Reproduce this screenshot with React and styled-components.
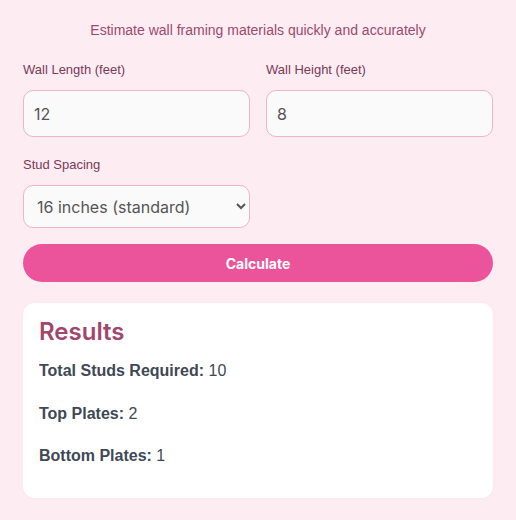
import React, { useState } from "react";
import styled, { createGlobalStyle } from "styled-components";

const GlobalStyle = createGlobalStyle`
  body {
    margin: 0;
    background: #fdedf3;
    font-family: "Liberation Sans", Arial, sans-serif;
  }
`;

const Page = styled.div`
  padding: 22px 23px 20px;
`;

const Subtitle = styled.p`
  margin: 0 0 24px;
  text-align: center;
  font-size: 14px;
  line-height: 16px;
  color: #9c4a6c;
`;

const Row = styled.div`
  display: grid;
  grid-template-columns: minmax(0, 1fr) minmax(0, 1fr);
  gap: 16px;
  margin-bottom: ${(p) => (p.$last ? "0" : "20px")};
`;

const Field = styled.div`
  display: flex;
  flex-direction: column;
  min-width: 0;
`;

const Label = styled.label`
  font-size: 13px;
  line-height: 15px;
  color: #7c3a55;
  margin-bottom: 13px;
`;

const Input = styled.input`
  box-sizing: border-box;
  width: 100%;
  height: 47px;
  padding: 0 10px;
  border: 1px solid #efb4ca;
  border-radius: 10px;
  background: #fafafa;
  font-family: Inter, sans-serif;
  font-size: 16px;
  color: #555;
  outline: none;
`;

const Select = styled.select`
  box-sizing: border-box;
  width: 100%;
  height: 43px;
  padding: 0 8px 0 9px;
  border: 1px solid #efb4ca;
  border-radius: 10px;
  background: #fafafa;
  font-family: Inter, sans-serif;
  font-size: 16px;
  color: #555;
  outline: none;
`;

const Button = styled.button`
  display: block;
  width: 100%;
  height: 38px;
  margin-top: 16px;
  border: none;
  border-radius: 19px;
  background: #eb549b;
  color: #fff;
  font-family: Inter, sans-serif;
  font-weight: 700;
  font-size: 14px;
  cursor: pointer;
`;

const Card = styled.div`
  margin-top: 21px;
  background: #fff;
  border-radius: 12px;
  padding: 14px 16px 33px;
  box-shadow: 0 0 4px rgba(236, 84, 155, 0.05);
`;

const Heading = styled.h2`
  margin: 0 0 14px;
  font-family: Inter, sans-serif;
  font-size: 24px;
  line-height: 30px;
  font-weight: 600;
  color: #a1476d;
`;

const Line = styled.p`
  margin: 0 0 23.5px;
  font-size: 16px;
  line-height: 19px;
  color: #414855;

  &:last-child {
    margin-bottom: 0;
  }

  strong {
    font-weight: 700;
  }
`;

export default function App() {
  const [length, setLength] = useState("12");
  const [height, setHeight] = useState("8");
  const [spacing, setSpacing] = useState("16");

  return (
    <Page>
      <GlobalStyle />
      <Subtitle>Estimate wall framing materials quickly and accurately</Subtitle>
      <Row>
        <Field>
          <Label htmlFor="length">Wall Length (feet)</Label>
          <Input id="length" value={length} onChange={(e) => setLength(e.target.value)} />
        </Field>
        <Field>
          <Label htmlFor="height">Wall Height (feet)</Label>
          <Input id="height" value={height} onChange={(e) => setHeight(e.target.value)} />
        </Field>
      </Row>
      <Row $last>
        <Field>
          <Label htmlFor="spacing">Stud Spacing</Label>
          <Select id="spacing" value={spacing} onChange={(e) => setSpacing(e.target.value)}>
            <option value="16">16 inches (standard)</option>
            <option value="24">24 inches</option>
          </Select>
        </Field>
      </Row>
      <Button>Calculate</Button>
      <Card>
        <Heading>Results</Heading>
        <Line><strong>Total Studs Required:</strong> 10</Line>
        <Line><strong>Top Plates:</strong> 2</Line>
        <Line><strong>Bottom Plates:</strong> 1</Line>
      </Card>
    </Page>
  );
}
